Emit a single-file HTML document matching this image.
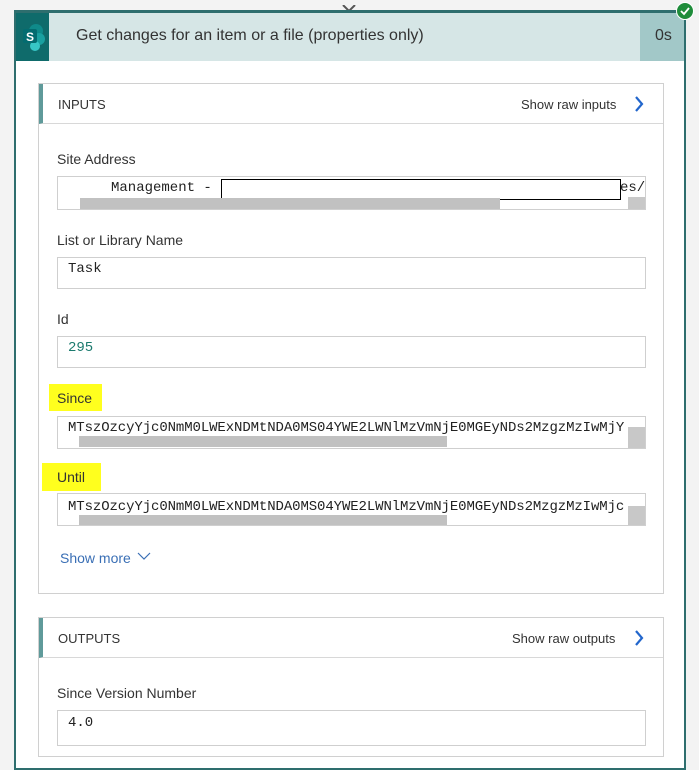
<!DOCTYPE html>
<html><head><meta charset="utf-8"><style>
body{margin:0;width:699px;height:748px;background:#f3f3f3;font-family:"Liberation Sans",sans-serif;position:relative;overflow:hidden;color:#333}
.a{position:absolute}
.card{left:14px;top:10px;width:672px;height:760px;border:2px solid #2e6e6e;border-top:3px solid #2e6e6e;background:#fff;box-sizing:border-box}
.hdr{left:16px;top:13px;width:668px;height:48px;background:#d6e6e6}
.panel{background:#fff;border:1px solid #d0d0d0;box-sizing:border-box}
.ph{height:40px;border-bottom:1px solid #d8d8d8;border-left:4px solid #5f9a9a;box-sizing:border-box;position:relative;font-size:13px;color:#333}
.lbl{font-size:14px;color:#333}
.box{border:1px solid #cfcfcf;box-sizing:border-box;background:#fff;font-family:"Liberation Mono",monospace;font-size:14px;color:#222;overflow:hidden;white-space:nowrap}
.sb{position:absolute;height:11px;background:#c1c1c1}
</style></head><body>
<div class="a" style="left:341px;top:0;width:16px;height:8px"><svg width="16" height="8"><path d="M2 0 L8 6 L14 0" stroke="#555" stroke-width="2" fill="none"/></svg></div>
<div class="a card"></div>
<div class="a hdr"></div>
<div class="a" style="left:16px;top:13px;width:33px;height:48px;background:#0f6b6b"></div>
<div class="a" style="left:22px;top:22px;width:26px;height:30px"><svg width="26" height="30"><circle cx="14" cy="9" r="7" fill="#0f8a8a"/><circle cx="17" cy="17" r="6" fill="#1aa0a0"/><circle cx="13" cy="24" r="5" fill="#37c6c6"/><rect x="1" y="7" width="14" height="14" rx="2" fill="#036c70"/><text x="4" y="19" font-size="12" font-weight="bold" fill="#fff" font-family="Liberation Sans">S</text></svg></div>
<div class="a" style="left:76px;top:27px;font-size:16px;color:#333">Get changes for an item or a file (properties only)</div>
<div class="a" style="left:640px;top:13px;width:44px;height:48px;background:#a2c8c8"></div>
<div class="a" style="left:655px;top:27px;font-size:16px;color:#333">0s</div>
<div class="a" style="left:676px;top:2px;width:16px;height:16px;border-radius:50%;background:#1e8c3a;border:1px solid #fff"><svg width="16" height="16"><path d="M4 8 L7 11 L12 5" stroke="#fff" stroke-width="1.8" fill="none"/></svg></div>

<div class="a panel" style="left:38px;top:83px;width:626px;height:511px">
 <div class="ph"><span class="a" style="left:15px;top:13px">INPUTS</span><span class="a" style="left:478px;top:13px">Show raw inputs</span><svg class="a" style="left:590px;top:11px" width="12" height="18"><path d="M3 2 L9 9 L3 16" stroke="#2266cc" stroke-width="2.2" fill="none"/></svg></div>
</div>
<div class="a lbl" style="left:57px;top:151px">Site Address</div>
<div class="a box" style="left:57px;top:176px;width:589px;height:34px"><span class="a" style="left:53px;top:3px">Management -</span><div class="a" style="left:163px;top:2px;width:398px;height:19px;border:1px solid #000;background:#fff"></div><span class="a" style="left:562px;top:3px">es/]</span><div class="sb" style="left:22px;top:21px;width:420px"></div><div class="a" style="left:570px;top:20px;width:17px;height:13px;background:#c8c8c8"></div></div>
<div class="a lbl" style="left:57px;top:232px">List or Library Name</div>
<div class="a box" style="left:57px;top:257px;width:589px;height:32px"><span class="a" style="left:10px;top:3px">Task</span></div>
<div class="a lbl" style="left:57px;top:311px">Id</div>
<div class="a box" style="left:57px;top:336px;width:589px;height:32px;color:#1b7a6e"><span class="a" style="left:10px;top:3px">295</span></div>
<div class="a" style="left:49px;top:384px;width:53px;height:27px;background:#ffff1e"></div>
<div class="a lbl" style="left:57px;top:390px">Since</div>
<div class="a box" style="left:57px;top:416px;width:589px;height:33px"><span class="a" style="left:10px;top:3px;letter-spacing:-0.1px">MTszOzcyYjc0NmM0LWExNDMtNDA0MS04YWE2LWNlMzVmNjE0MGEyNDs2MzgzMzIwMjY</span><div class="sb" style="left:21px;top:19px;width:368px"></div><div class="a" style="left:570px;top:10px;width:17px;height:22px;background:#c8c8c8"></div></div>
<div class="a" style="left:42px;top:463px;width:59px;height:28px;background:#ffff1e"></div>
<div class="a lbl" style="left:57px;top:469px">Until</div>
<div class="a box" style="left:57px;top:493px;width:589px;height:33px"><span class="a" style="left:10px;top:5px;letter-spacing:-0.1px">MTszOzcyYjc0NmM0LWExNDMtNDA0MS04YWE2LWNlMzVmNjE0MGEyNDs2MzgzMzIwMjc</span><div class="sb" style="left:21px;top:21px;width:368px"></div><div class="a" style="left:570px;top:12px;width:17px;height:20px;background:#c8c8c8"></div></div>
<div class="a" style="left:60px;top:550px;font-size:14px;color:#3a6fb5">Show more</div>
<svg class="a" style="left:136px;top:551px" width="16" height="10"><path d="M2 2 L8 8 L14 2" stroke="#3a6fb5" stroke-width="1.2" fill="none"/></svg>

<div class="a panel" style="left:38px;top:617px;width:626px;height:140px">
 <div class="ph"><span class="a" style="left:15px;top:13px">OUTPUTS</span><span class="a" style="left:469px;top:13px">Show raw outputs</span><svg class="a" style="left:590px;top:11px" width="12" height="18"><path d="M3 2 L9 9 L3 16" stroke="#2266cc" stroke-width="2.2" fill="none"/></svg></div>
</div>
<div class="a lbl" style="left:57px;top:685px">Since Version Number</div>
<div class="a box" style="left:57px;top:710px;width:589px;height:36px"><span class="a" style="left:10px;top:4px">4.0</span></div>
</body></html>
